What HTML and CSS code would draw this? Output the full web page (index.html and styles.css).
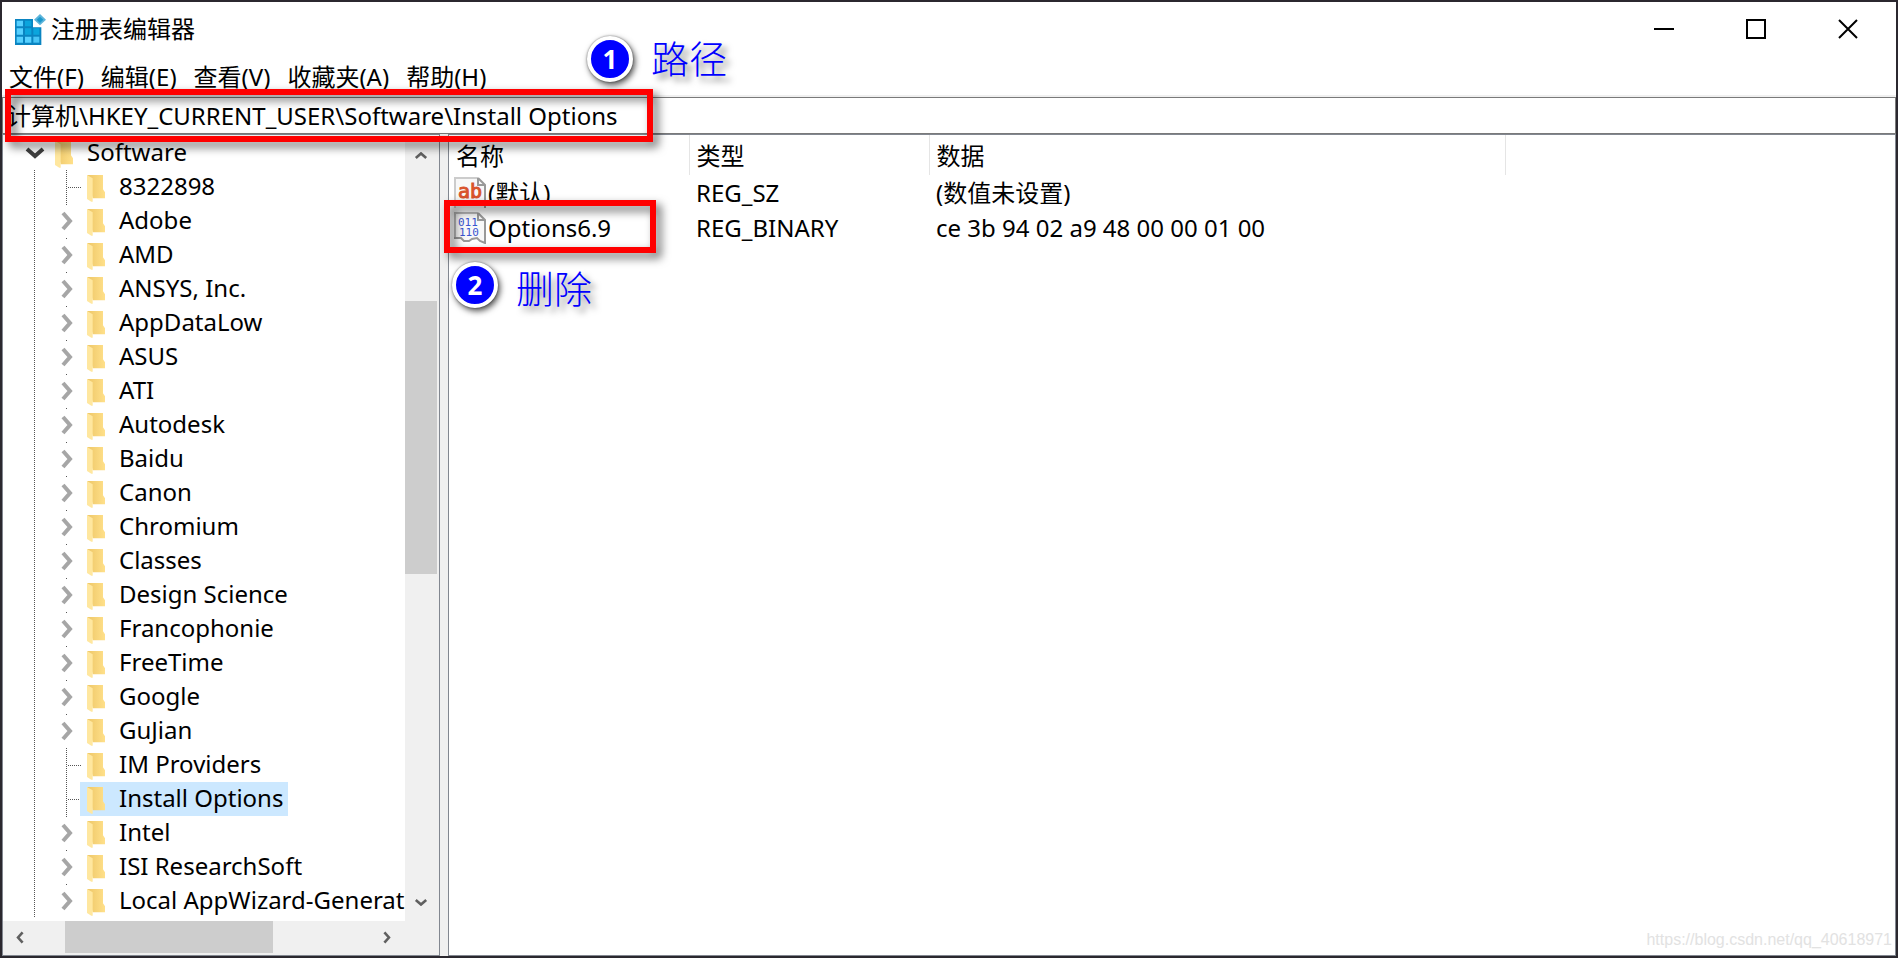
FILE: index.html
```html
<!DOCTYPE html>
<html lang="zh-CN">
<head>
    <meta charset="UTF-8">
    <meta name="viewport" content="width=device-width, initial-scale=1.0">
    <title>注册表编辑器</title>
    <link rel="stylesheet" href="styles.css">
</head>
<body>

    <!-- Shared icons -->
    <svg class="sprite" aria-hidden="true">
        <defs>
            <linearGradient id="fold" x1="0" x2="1">
                <stop offset="0" stop-color="#eec767"/>
                <stop offset="1" stop-color="#ffe08a"/>
            </linearGradient>
            <symbol id="folder" viewBox="0 0 54 81">
                <path d="M1 0H48V43L54 52V70H17z" fill="url(#fold)"/>
                <path d="M0 0L17 10V80H13L0 72z" fill="#ffe79f"/>
            </symbol>
            <symbol id="arrow" viewBox="0 0 12 20">
                <path d="M2 2L9 10L2 18" fill="none" stroke="currentColor" stroke-width="4"/>
            </symbol>
            <symbol id="page" viewBox="0 0 32 32">
                <path d="M1 1H24L31 8V31H1z" fill="#f8f8f8"/>
                <path d="M1 31V1H24" fill="none" stroke="#ccc" stroke-width="2"/>
                <path d="M24 1L31 8V31M24 1V8H31" fill="none" stroke="#999" stroke-width="2"/>
            </symbol>
        </defs>
    </svg>

    <div class="window">

        <!-- Title bar -->
        <header class="titlebar">
            <svg class="app-icon" viewBox="0 0 93 93">
                <path d="M0 15H54V40H79V93H0z" fill="#0a84c1"/>
                <path d="M5 20h19v17H5zM5 43h19v19H5zM5 68h19v18H5zM30 68h19v18H30z" fill="#56d0ff"/>
                <path d="M30 20h19v17H30zM30 43h19v19H30zM55 43h18v19H55z" fill="#0ba5dd"/>
                <path d="M55 68h18v18H55z" fill="#48c4f5"/>
                <path d="M75 0L93 17L75 34L57 17z" fill="#5cb4da"/>
                <path d="M75 8L85 17L75 27L65 17z" fill="#1b97cc"/>
            </svg>
            <h1>注册表编辑器</h1>
            <div class="window-buttons">
                <button type="button" aria-label="最小化"><svg viewBox="0 0 20 20"><path d="M0 10H20"/></svg></button>
                <button type="button" aria-label="最大化"><svg viewBox="0 0 20 20"><path d="M1 1H19V19H1z"/></svg></button>
                <button type="button" aria-label="关闭"><svg viewBox="0 0 20 20"><path d="M1 1L19 19M19 1L1 19"/></svg></button>
            </div>
        </header>

        <!-- Menu -->
        <nav class="menu">
            <button type="button">文件(F)</button>
            <button type="button">编辑(E)</button>
            <button type="button">查看(V)</button>
            <button type="button">收藏夹(A)</button>
            <button type="button">帮助(H)</button>
        </nav>

        <input class="address" type="text" aria-label="路径" value="计算机\HKEY_CURRENT_USER\Software\Install Options">

        <main class="panes">

            <!-- Key tree -->
            <section class="tree-pane">
                <ul class="tree">
                    <li class="root"><button type="button" aria-label="折叠"><svg><use href="#arrow"/></svg></button><span class="key"><svg><use href="#folder"/></svg>Software</span></li>
                    <li class="leaf"><span class="key"><svg><use href="#folder"/></svg>8322898</span></li>
                    <li><button type="button" aria-label="展开"><svg><use href="#arrow"/></svg></button><span class="key"><svg><use href="#folder"/></svg>Adobe</span></li>
                    <li><button type="button" aria-label="展开"><svg><use href="#arrow"/></svg></button><span class="key"><svg><use href="#folder"/></svg>AMD</span></li>
                    <li><button type="button" aria-label="展开"><svg><use href="#arrow"/></svg></button><span class="key"><svg><use href="#folder"/></svg>ANSYS, Inc.</span></li>
                    <li><button type="button" aria-label="展开"><svg><use href="#arrow"/></svg></button><span class="key"><svg><use href="#folder"/></svg>AppDataLow</span></li>
                    <li><button type="button" aria-label="展开"><svg><use href="#arrow"/></svg></button><span class="key"><svg><use href="#folder"/></svg>ASUS</span></li>
                    <li><button type="button" aria-label="展开"><svg><use href="#arrow"/></svg></button><span class="key"><svg><use href="#folder"/></svg>ATI</span></li>
                    <li><button type="button" aria-label="展开"><svg><use href="#arrow"/></svg></button><span class="key"><svg><use href="#folder"/></svg>Autodesk</span></li>
                    <li><button type="button" aria-label="展开"><svg><use href="#arrow"/></svg></button><span class="key"><svg><use href="#folder"/></svg>Baidu</span></li>
                    <li><button type="button" aria-label="展开"><svg><use href="#arrow"/></svg></button><span class="key"><svg><use href="#folder"/></svg>Canon</span></li>
                    <li><button type="button" aria-label="展开"><svg><use href="#arrow"/></svg></button><span class="key"><svg><use href="#folder"/></svg>Chromium</span></li>
                    <li><button type="button" aria-label="展开"><svg><use href="#arrow"/></svg></button><span class="key"><svg><use href="#folder"/></svg>Classes</span></li>
                    <li><button type="button" aria-label="展开"><svg><use href="#arrow"/></svg></button><span class="key"><svg><use href="#folder"/></svg>Design Science</span></li>
                    <li><button type="button" aria-label="展开"><svg><use href="#arrow"/></svg></button><span class="key"><svg><use href="#folder"/></svg>Francophonie</span></li>
                    <li><button type="button" aria-label="展开"><svg><use href="#arrow"/></svg></button><span class="key"><svg><use href="#folder"/></svg>FreeTime</span></li>
                    <li><button type="button" aria-label="展开"><svg><use href="#arrow"/></svg></button><span class="key"><svg><use href="#folder"/></svg>Google</span></li>
                    <li><button type="button" aria-label="展开"><svg><use href="#arrow"/></svg></button><span class="key"><svg><use href="#folder"/></svg>GuJian</span></li>
                    <li class="leaf"><span class="key"><svg><use href="#folder"/></svg>IM Providers</span></li>
                    <li class="leaf"><span class="key selected"><svg><use href="#folder"/></svg>Install Options</span></li>
                    <li><button type="button" aria-label="展开"><svg><use href="#arrow"/></svg></button><span class="key"><svg><use href="#folder"/></svg>Intel</span></li>
                    <li><button type="button" aria-label="展开"><svg><use href="#arrow"/></svg></button><span class="key"><svg><use href="#folder"/></svg>ISI ResearchSoft</span></li>
                    <li><button type="button" aria-label="展开"><svg><use href="#arrow"/></svg></button><span class="key"><svg><use href="#folder"/></svg>Local AppWizard-Generated Applications</span></li>
                </ul>
                <div class="scroll vertical">
                    <button type="button" class="up" aria-label="向上"><svg><use href="#arrow"/></svg></button>
                    <div class="track"><div class="thumb"></div></div>
                    <button type="button" class="down" aria-label="向下"><svg><use href="#arrow"/></svg></button>
                </div>
                <div class="scroll horizontal">
                    <button type="button" class="left" aria-label="向左"><svg><use href="#arrow"/></svg></button>
                    <div class="track"><div class="thumb"></div></div>
                    <button type="button" class="right" aria-label="向右"><svg><use href="#arrow"/></svg></button>
                </div>
            </section>

            <!-- Values -->
            <section class="value-pane">
                <table>
                    <colgroup>
                        <col class="col-name">
                        <col class="col-type">
                        <col class="col-data">
                        <col>
                    </colgroup>
                    <thead>
                        <tr><th>名称</th><th>类型</th><th>数据</th><td></td></tr>
                    </thead>
                    <tbody>
                        <tr>
                            <td><div class="value-name">
                                <svg viewBox="0 0 32 32"><use href="#page"/><text x="4" y="21" class="ab">ab</text></svg>
                                (默认)
                            </div></td>
                            <td>REG_SZ</td>
                            <td>(数值未设置)</td>
                            <td></td>
                        </tr>
                        <tr>
                            <td><div class="value-name">
                                <svg viewBox="0 0 32 32">
                                    <path d="M1 1H24L31 8V31L24 27H18L14 29L8 26H1z" fill="#f8f8f8"/>
                                    <path d="M1 25V1H24" fill="none" stroke="#bbb" stroke-width="2"/>
                                    <path d="M24 1L31 8V31L26 29L23 26L18 27L15 29H10L7 26H0M24 1V8H31" fill="none" stroke="#999" stroke-width="2"/>
                                    <text x="4" y="14" class="bits">011</text>
                                    <text x="5" y="24" class="bits">110</text>
                                </svg>
                                Options6.9
                            </div></td>
                            <td>REG_BINARY</td>
                            <td>ce 3b 94 02 a9 48 00 00 01 00</td>
                            <td></td>
                        </tr>
                    </tbody>
                </table>
            </section>
        </main>
    </div>

    <!-- Step marks drawn over the window -->
    <div class="mark mark-path"></div>
    <div class="mark mark-value"></div>
    <div class="step step-path"><b>1</b><span>路径</span></div>
    <div class="step step-value"><b>2</b><span>删除</span></div>
    <div class="watermark">https://blog.csdn.net/qq_40618971</div>

</body>
</html>
```
FILE: styles.css
```css
:root {
    --frame: #2b282f;
    --line: #828790;
    --bar: #f0f0f0;
    --thumb: #cdcdcd;
    --selected: #cce8ff;
    --mark: #ff0000;
    --step: #0000ff;
}

* {
    margin: 0;
    padding: 0;
    box-sizing: border-box;
}

body {
    position: relative;
    height: 100vh;
    overflow: hidden;
    font-family: "Noto Sans", "Noto Sans CJK SC", sans-serif;
    font-size: 24px;
    line-height: 34px;
    color: #000;
    background: var(--frame);
}

button {
    font: inherit;
    color: inherit;
    background: none;
    border: none;
}

svg {
    display: block;
    flex: none;
}

.sprite {
    position: absolute;
    width: 0;
    height: 0;
}

.window {
    height: 100vh;
    display: flex;
    flex-direction: column;
    border: 2px solid var(--frame);
    background: #fff;
}

/* Title bar */
.titlebar {
    height: 54px;
    display: flex;
    align-items: center;
    padding: 0 2px 0 13px;
}

.app-icon {
    width: 31px;
    height: 31px;
}

.titlebar h1 {
    margin-left: 5px;
    font-size: 24px;
    font-weight: normal;
}

.window-buttons {
    display: flex;
    margin-left: auto;
}

.window-buttons button {
    width: 92px;
    height: 54px;
    display: flex;
    align-items: center;
    justify-content: center;
}

.window-buttons svg {
    width: 20px;
    height: 20px;
    fill: none;
    stroke: #000;
    stroke-width: 2;
}

/* Menu */
.menu {
    height: 41px;
    display: flex;
    align-items: center;
    gap: 17px;
    padding: 2px 0 0 7px;
    border-bottom: 2px solid var(--bar);
}

.address {
    width: 100%;
    height: 37px;
    padding: 0 4px 2px;
    font: inherit;
    border: 1px solid #7a7a7a;
    outline: none;
}

/* Panes */
.panes {
    flex: 1;
    min-height: 0;
    display: flex;
    gap: 8px;
    background: var(--bar);
}

.tree-pane {
    width: 438px;
    display: grid;
    grid-template: minmax(0, 1fr) 34px / minmax(0, 1fr) 34px;
    padding-top: 1px;
    border: 1px solid var(--line);
    background: #fff;
}

.value-pane {
    flex: 1;
    min-width: 0;
    border: 1px solid var(--line);
    background: #fff;
}

/* Tree */
.tree {
    list-style: none;
    overflow: hidden;
    white-space: nowrap;
}

.tree li {
    height: 34px;
    display: flex;
    padding-left: 48px;
    background:
        repeating-linear-gradient(#555 0 1px, transparent 1px 2px) 31px 0 / 1px 100% no-repeat,
        linear-gradient(#555, #555) 63px 0 / 1px 1px no-repeat;
}

.tree .root {
    padding-left: 16px;
    background: none;
}

.tree .leaf {
    padding-left: 77px;
    background:
        repeating-linear-gradient(#555 0 1px, transparent 1px 2px) 31px 0 / 1px 100% no-repeat,
        repeating-linear-gradient(#555 0 1px, transparent 1px 2px) 63px 0 / 1px 100% no-repeat,
        repeating-linear-gradient(90deg, #555 0 1px, transparent 1px 2px) 65px 17px / 14px 1px no-repeat;
}

.tree button {
    flex: none;
    width: 29px;
    display: flex;
    align-items: center;
    padding-left: 10px;
    color: #a6a6a6;
}

.tree button svg {
    width: 12px;
    height: 20px;
}

.tree .root button {
    color: #404040;
}

.tree .root button svg {
    transform: rotate(90deg);
}

.key {
    display: flex;
    align-items: center;
    gap: 14px;
    padding: 0 5px 2px 7px;
}

.key svg {
    width: 18px;
    height: 27px;
    margin-top: 4px;
}

.selected {
    background: var(--selected);
}

/* Scroll bars */
.scroll {
    display: flex;
    background: var(--bar);
}

.scroll button {
    flex: none;
    width: 32px;
    height: 38px;
    display: flex;
    align-items: center;
    justify-content: center;
    color: #606060;
}

.scroll button svg {
    width: 8px;
    height: 13px;
}

.scroll .up svg {
    transform: rotate(-90deg);
}

.scroll .down svg {
    transform: rotate(90deg);
}

.scroll .left svg {
    transform: rotate(180deg);
}

.scroll .track {
    flex: 1;
}

.thumb {
    background: var(--thumb);
}

.vertical {
    flex-direction: column;
}

.vertical .track {
    padding-top: 127px;
}

.vertical .thumb {
    width: 32px;
    height: 273px;
}

.horizontal {
    grid-column: 1 / -1;
    padding: 0 36px 0 1px;
}

.horizontal button {
    height: 32px;
}

.horizontal .track {
    padding-left: 29px;
}

.horizontal .thumb {
    width: 208px;
    height: 32px;
}

/* Values */
table {
    width: 100%;
    table-layout: fixed;
    border-collapse: collapse;
    white-space: nowrap;
}

.col-name {
    width: 240px;
}

.col-type {
    width: 240px;
}

.col-data {
    width: 576px;
}

th {
    height: 40px;
    padding: 2px 0 0 7px;
    font-weight: normal;
    text-align: left;
    border-right: 1px solid #e5e5e5;
}

tbody td {
    height: 35px;
    padding-left: 7px;
}

tbody td:first-child {
    padding-left: 5px;
}

.value-name {
    display: flex;
    align-items: center;
    gap: 2px;
}

.value-name svg {
    width: 32px;
    height: 32px;
}

.ab {
    font: 20px "DejaVu Sans Mono", monospace;
    fill: #d9532c;
    stroke: #d9532c;
}

.bits {
    font: 11px "DejaVu Sans Mono", monospace;
    fill: #3a55d0;
}

/* Marks over the window */
.mark {
    position: absolute;
    height: 53px;
    border: 6px solid var(--mark);
    filter: drop-shadow(5px 5px 5px rgba(0, 0, 0, 0.6));
}

.mark-path {
    top: 89px;
    left: 5px;
    width: 648px;
}

.mark-value {
    top: 200px;
    left: 444px;
    width: 212px;
}

.step {
    position: absolute;
    display: flex;
    align-items: center;
    gap: 18px;
    color: var(--step);
}

.step b {
    width: 46px;
    height: 46px;
    border: 4px solid #fff;
    border-radius: 50%;
    background: var(--step);
    color: #fff;
    font-size: 26px;
    line-height: 38px;
    text-align: center;
    box-shadow: 2px 3px 6px rgba(0, 0, 0, 0.7), 0 0 2px rgba(0, 0, 0, 0.5);
}

.step span {
    font-family: "Noto Sans CJK SC", sans-serif;
    font-size: 38px;
    font-weight: 300;
    line-height: 42px;
    text-shadow: 5px 5px 6px rgba(0, 0, 0, 0.5);
}

.step-path {
    top: 36px;
    left: 587px;
    align-items: flex-start;
}

.step-value {
    top: 262px;
    left: 452px;
    align-items: flex-end;
}

.watermark {
    position: absolute;
    right: 6px;
    bottom: 8px;
    font: 16px/20px "Liberation Sans", sans-serif;
    color: #e2e2e2;
}
```
